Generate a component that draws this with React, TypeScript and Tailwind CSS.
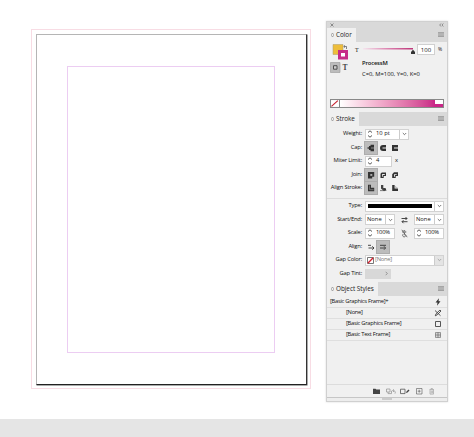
import { ReactNode } from 'react';
import clsx from 'clsx';

function PanelHeader({ title, width }: { title: string; width: string }) {
  return (
    <div className="flex h-[14px] shrink-0 justify-between bg-[#d9d9d9]">
      <div className={clsx('flex items-center gap-[2px] bg-[#f0f0f0] pl-[4px] text-[6.4px] tracking-[-0.05px] whitespace-nowrap text-[#222]', width)}>
        <svg width="3" height="6" viewBox="0 0 3 6" fill="none" stroke="#777" strokeWidth=".6">
          <path d="M.4 2.5 1.5 1l1.1 1.5v1L1.5 5 .4 3.5z" />
        </svg>
        {title}
      </div>
      <svg className="mt-[4px] mr-[3px]" width="6" height="5" viewBox="0 0 6 5" stroke="#888" strokeWidth=".7">
        <path d="M0 .6h6M0 1.9h6M0 3.2h6M0 4.5h6" />
      </svg>
    </div>
  );
}

function Row({ label, height, children }: { label: string; height: string; children: ReactNode }) {
  return (
    <div className={clsx('flex items-center', height)}>
      <span className="mr-[3px] w-[35px] shrink-0 text-right tracking-[-0.2px] whitespace-nowrap">{label}</span>
      {children}
    </div>
  );
}

function Stepper() {
  return (
    <svg className="shrink-0" width="8" height="10" viewBox="0 0 8 10" fill="none" stroke="#444" strokeWidth=".9">
      <path d="M2 3.5 4 1.8l2 1.7M2 6.5l2 1.7 2-1.7" />
    </svg>
  );
}

function Chevron({ dim }: { dim?: boolean }) {
  return (
    <span className={clsx('flex h-full w-[9px] shrink-0 items-center justify-center border-l border-[#ccc]', dim && 'bg-[#e4e4e4]')}>
      <svg width="5" height="4" viewBox="0 0 5 4" fill="none" stroke={dim ? '#999' : '#555'} strokeWidth=".8">
        <path d="M.8 1 2.5 2.7 4.2 1" />
      </svg>
    </span>
  );
}

function Field({ width, children }: { width: string; children: ReactNode }) {
  return (
    <div className={clsx('flex h-[11px] shrink-0 items-center border border-[#d2d2d2] bg-white', width)}>{children}</div>
  );
}

function IconButton({ active, children }: { active?: boolean; children: ReactNode }) {
  return (
    <div className={clsx('flex h-[12px] w-[12px] shrink-0 items-center justify-center', active && 'bg-[#bcbcbc] outline-[.5px] outline-[#acacac]')}>
      <svg width="8" height="8" viewBox="0 0 8 8" fill="none" stroke="#333" strokeWidth="1">
        {children}
      </svg>
    </div>
  );
}

function NoneSwatch() {
  return (
    <svg className="shrink-0" width="7" height="7" viewBox="0 0 7 7">
      <path d="M.5.5h6v6h-6z" fill="#fff" stroke="#555" strokeWidth=".8" />
      <path d="M.8 6.2 6.2.8" stroke="#d2202f" strokeWidth="1.3" />
    </svg>
  );
}

function ColorPanel() {
  return (
    <div className="flex h-[70px] shrink-0 flex-col px-[3px]">
      <div className="flex h-[57px] pt-[2px]">
        <div className="w-[24px]">
          <svg width="24" height="31" viewBox="0 0 24 31">
            <path d="M3 .5h10v10H3z" fill="#edbd3b" stroke="#a99a70" strokeWidth=".5" />
            <path d="M14 2.5h2.5V5M15 1.3 13.7 2.5 15 3.7" fill="none" stroke="#555" strokeWidth=".7" />
            <path d="M8 6h10v9.5H8z" fill="#c62a87" />
            <path d="M11 9h4v3.5h-4z" fill="#fff" />
            <path d="M.5 18.5h9.5v10H.5z" fill="#bcbcbc" stroke="#999" strokeWidth=".6" />
            <path d="M3.5 21.7H7v3.5H3.5z" fill="#ccc" stroke="#444" strokeWidth=".9" />
            <text x="12.5" y="25.7" fontSize="7.5" fontWeight="700" fill="#444" fontFamily="Liberation Serif, serif">T</text>
          </svg>
        </div>
        <div className="flex-1">
          <div className="flex h-[11px] items-center">
            <span className="w-[8px] pl-px font-['Liberation_Serif',serif] text-[6px]">T</span>
            <svg width="55" height="11" viewBox="0 0 55 11">
              <defs>
                <linearGradient id="tint">
                  <stop offset="0" stopColor="#f4e5ed" />
                  <stop offset=".5" stopColor="#dc83b0" />
                  <stop offset="1" stopColor="#bd3679" />
                </linearGradient>
              </defs>
              <path d="M1 4h50v1.5H1z" fill="url(#tint)" />
              <path d="M51 5.7 53 8v2h-4V8z" fill="#333" />
            </svg>
            <div className="flex h-[11px] w-[18px] items-center justify-center border border-[#d0d0d0] bg-white text-[6px]">100</div>
            <span className="ml-[3px] text-[5px]">%</span>
          </div>
          <div className="mt-[3px] ml-[8px] whitespace-nowrap">
            <p className="h-[11px] leading-[11px] font-semibold tracking-[-0.15px]">ProcessM</p>
            <p className="h-[11px] leading-[11px]">C=0, M=100, Y=0, K=0</p>
          </div>
        </div>
      </div>
      <div className="flex h-[9px] border border-[#888]">
        <svg className="border-r border-[#888]" width="9" height="7" viewBox="0 0 9 7">
          <path d="M0 0h9v7H0z" fill="#fff" />
          <path d="M.5 6.8 7.7.2" stroke="#c6202e" strokeWidth="1.3" />
        </svg>
        <div className="flex-1 bg-linear-to-r from-white to-[#c92587]" />
        <div className="w-[8px] bg-[#c92587]">
          <div className="h-[4px] bg-white" />
        </div>
      </div>
    </div>
  );
}

function StrokePanel() {
  return (
    <div className="h-[156px] shrink-0">
      <div className="h-[73px] border-b border-[#dcdcdc] pt-[1px]">
        <Row label="Weight:" height="h-[14px]">
          <Field width="w-[44px]">
            <Stepper />
            <span className="ml-[2px] flex-1">10 pt</span>
            <Chevron />
          </Field>
        </Row>
        <Row label="Cap:" height="h-[13px]">
          <IconButton active>
            <path d="M3.5.8H7v6.4H3.5V6H2V2h1.5z" fill="#333" stroke="none" />
            <path d="M.5 4h4" stroke="#333" strokeWidth="1.4" />
            <path d="M4 4h3" stroke="#ccc" strokeWidth=".6" />
          </IconButton>
          <IconButton>
            <path d="M7 1H4a3 3 0 0 0 0 6h3z" fill="#333" stroke="none" />
            <path d="M3.5 4H7" stroke="#eee" />
          </IconButton>
          <IconButton>
            <path d="M1 1h6v6H1z" fill="#333" stroke="none" />
            <path d="M3 4h4" stroke="#eee" />
          </IconButton>
        </Row>
        <Row label="Miter Limit:" height="h-[14px]">
          <Field width="w-[27px]">
            <Stepper />
            <span className="ml-[2px]">4</span>
          </Field>
          <span className="ml-[3px]">x</span>
        </Row>
        <Row label="Join:" height="h-[13px]">
          <IconButton active>
            <path d="M1 1h6.2v4.8H5.2v1.7H1z" fill="#333" stroke="none" />
            <path d="M3.3 3.2h2v1.5h-2z" fill="#ccc" stroke="none" />
          </IconButton>
          <IconButton>
            <path d="M1.5 7V3.2q0-1.7 1.7-1.7H7v3.6H4.7V7z" fill="#333" stroke="none" />
            <path d="M3.1 5.8V3h2.7v1H3.9v1.8z" fill="#eee" stroke="none" />
          </IconButton>
          <IconButton>
            <path d="M1.2 7V3.2L3 1.3h4v3.8H4.7V7z" fill="#333" stroke="none" />
            <path d="M3 5.8V3.2h2.7v.9H3.9v1.7z" fill="#eee" stroke="none" />
          </IconButton>
        </Row>
        <Row label="Align Stroke:" height="h-[14px]">
          <IconButton active>
            <path d="M1 .8h3v3h3.2v3.4H1z" fill="#333" stroke="none" />
            <path d="M2.6 1.5v4.2h4" stroke="#aaa" strokeWidth=".5" />
          </IconButton>
          <IconButton>
            <path d="M2 1h2.3v3H6.5l1 2.8H4.5L2 4.5z" fill="#444" stroke="none" />
            <path d="M1 6.6h5M5 5.4h2" strokeWidth=".6" />
          </IconButton>
          <IconButton>
            <path d="M1.2 1h2.4v3.5H7V7H1.2z" fill="#333" stroke="none" />
            <path d="M4.6 2v1.6H6.5" strokeWidth=".5" stroke="#888" />
          </IconButton>
        </Row>
      </div>
      <div className="h-[82px]">
        <Row label="Type:" height="h-[14px]">
          <Field width="w-[79px]">
            <div className="mx-[2px] h-[4px] flex-1 bg-black" />
            <Chevron />
          </Field>
        </Row>
        <Row label="Start/End:" height="h-[13px]">
          <Field width="w-[30px]">
            <span className="ml-[1px] flex-1">None</span>
            <Chevron />
          </Field>
          <svg className="mx-[6px]" width="7" height="8" viewBox="0 0 7 8" fill="none" stroke="#333" strokeWidth=".9">
            <path d="M.5 2.5h5.5M4.5 1 6 2.5 4.5 4M6.5 5.7H1M2.5 4.2 1 5.7l1.5 1.5" />
          </svg>
          <Field width="w-[30px]">
            <span className="ml-[1px] flex-1">None</span>
            <Chevron />
          </Field>
        </Row>
        <Row label="Scale:" height="h-[14px]">
          <Field width="w-[30px]">
            <Stepper />
            <span className="ml-[2px] tracking-[-0.2px]">100%</span>
          </Field>
          <svg className="mx-[6px]" width="7" height="9" viewBox="0 0 7 9" fill="none" stroke="#555" strokeWidth=".8">
            <path d="M2 3.8a1.5 1.5 0 1 1 2.6 0M3.3 2.2v4M2 5.2a1.6 1.6 0 1 0 2.8 1M.8.8l5.4 7.4" />
          </svg>
          <Field width="w-[30px]">
            <Stepper />
            <span className="ml-[2px] tracking-[-0.2px]">100%</span>
          </Field>
        </Row>
        <Row label="Align:" height="h-[13px]">
          <IconButton>
            <path d="M1 2.3h3M1.5 5H7M5.3 3.3 7 5 5.3 6.7" strokeWidth=".9" />
          </IconButton>
          <IconButton active>
            <path d="M1 2.3h6M1 5h5M5 3.3 6.7 5 5 6.7" strokeWidth=".9" />
          </IconButton>
        </Row>
        <Row label="Gap Color:" height="h-[14px]">
          <Field width="w-[79px]">
            <span className="ml-[1px] flex">
              <NoneSwatch />
            </span>
            <span className="ml-[1px] flex-1 tracking-[-0.25px] text-[#777]">[None]</span>
            <Chevron dim />
          </Field>
        </Row>
        <Row label="Gap Tint:" height="h-[13px]">
          <div className="flex h-[10px] w-[26px] items-center justify-end bg-[#d8d8d8] pr-[3px]">
            <svg width="3" height="5" viewBox="0 0 3 5" fill="none" stroke="#777" strokeWidth=".7">
              <path d="m.7.8 1.6 1.7L.7 4.2" />
            </svg>
          </div>
        </Row>
      </div>
    </div>
  );
}

function StyleRow({ name, indent, children }: { name: string; indent?: boolean; children: ReactNode }) {
  return (
    <div className={clsx('flex h-[11px] items-center justify-between border-b border-[#dfdfdf] pr-[5px]', indent ? 'pl-[19px]' : 'pl-[3px]')}>
      <span className="tracking-[-0.3px]">{name}</span>
      <svg width="8" height="8" viewBox="0 0 8 8" fill="none" stroke="#444" strokeWidth=".7">
        {children}
      </svg>
    </div>
  );
}

function ObjectStylesPanel() {
  return (
    <>
      <div className="flex-1 pt-[1px]">
        <StyleRow name="[Basic Graphics Frame]+">
          <path d="M5 .2 1.5 4.6h2L3 7.8l3.5-4.6h-2z" fill="#333" stroke="none" />
        </StyleRow>
        <StyleRow name="[None]" indent>
          <path d="m1.3 6.8.7-2L6 1l1 1-3.8 3.8zM1 1.5l5.5 5.2" strokeWidth=".9" />
        </StyleRow>
        <StyleRow name="[Basic Graphics Frame]" indent>
          <path d="M1.5 1.5h5v5h-5z" strokeWidth=".9" />
        </StyleRow>
        <StyleRow name="[Basic Text Frame]" indent>
          <path d="M1.5 1.5h5v5h-5zM4 1.5v5M1.5 3.2h5M1.5 4.8h5" strokeWidth=".5" />
        </StyleRow>
      </div>
      <div className="flex h-[13px] shrink-0 items-center justify-end border-t border-[#dcdcdc] pr-[10px]">
        <svg width="66" height="9" viewBox="0 0 66 9" fill="none" stroke="#555" strokeWidth=".8">
          <path d="M2 1.7h2.5l.8.8H9V7H2z" fill="#444" stroke="none" />
          <path d="M15.5 2h3.5v3h-3.5zM17 5v1.6h3.5V3.8M24 6.6c.8-2 0-3-2.2-3M23 2.3l-1.4 1.3L23 5" stroke="#999" />
          <path d="M29.5 2.2H34v4.4h-4.5z" />
          <path d="m35 6 .5-1.5 2-2 1 1-2 2z" fill="#444" stroke="none" />
          <path d="M45.5 1.5H51V7h-5.500zM48.200 2.700v3M46.700 4.200h3" strokeWidth=".6" />
          <path d="M58.5 2.5h4.500M60 2.300v-.8h1.500v.8M59 2.800v4.300h3.500V2.800M60.200 3.500v2.800M61.400 3.500v2.800" stroke="#aaa" />
        </svg>
      </div>
      <div className="flex h-[4px] shrink-0 justify-center border-t border-[#c6c6c6] bg-[#ededed]">
        <div className="h-[2px] w-[10px] bg-[#ccc]" />
      </div>
    </>
  );
}

export default function App() {
  return (
    <div className="flex h-[437px] w-[474px] flex-col justify-between overflow-hidden bg-white font-['Open_Sans',sans-serif] text-[5.8px] leading-none text-[#111]">
      <div className="flex items-start pl-[31px]">
        {/* bleed, page and margin guides */}
        <div className="mt-[29px] h-[360px] w-[280px] border border-[#f8dce4] p-[4px]">
          <div className="h-[350.5px] w-[271px] border-t border-r border-b border-l border-t-[#b5b5b5] border-r-[#333] border-b-[#222] border-l-[#b5b5b5] pt-[31px] pl-[31px] shadow-[0.5px_0.5px_0_0_#555]">
            <div className="-ml-px h-[287px] w-[208px] border border-[#eccdf2]" />
          </div>
        </div>

        <div className="mt-[21px] ml-[15px] flex h-[381px] w-[122px] flex-col border border-[#d0d0d0] bg-[#f0f0f0] shadow-[0_0_2px_rgba(0,0,0,0.15)]">
          <div className="flex h-[6px] shrink-0 items-center justify-between bg-[#d9d9d9] px-[3px]">
            <svg width="4" height="4" viewBox="0 0 4 4" stroke="#777" strokeWidth=".8">
              <path d="m.5.5 3 3M3.5.5l-3 3" />
            </svg>
            <svg width="5" height="4" viewBox="0 0 5 4" fill="none" stroke="#777" strokeWidth=".8">
              <path d="M2 .5.7 2 2 3.5M4.3.5 3 2l1.3 1.5" />
            </svg>
          </div>
          <PanelHeader title="Color" width="w-[29px]" />
          <ColorPanel />
          <PanelHeader title="Stroke" width="w-[32px]" />
          <StrokePanel />
          <PanelHeader title="Object Styles" width="w-[51px]" />
          <ObjectStylesPanel />
        </div>
      </div>
      <div className="h-[18px] bg-[#e5e5e5]" />
    </div>
  );
}
